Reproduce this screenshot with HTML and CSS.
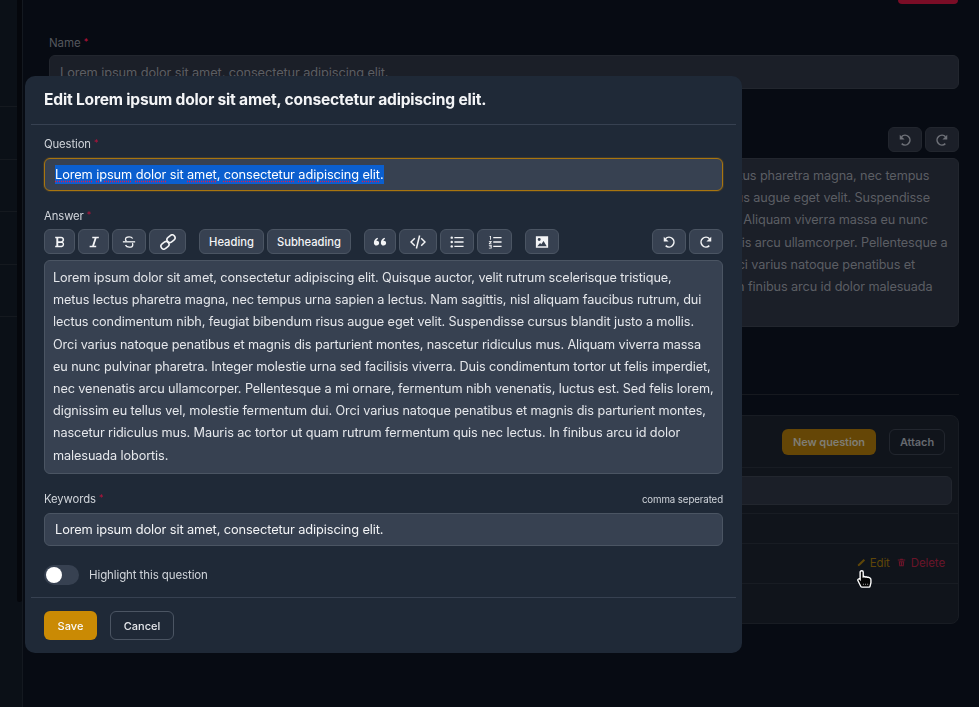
FILE: index.html
```html
<!DOCTYPE html>
<html lang="en">
<head>
<meta charset="utf-8">
<title>Edit question</title>
<link rel="stylesheet" href="styles.css">
</head>
<body>
<div class="app">
  <aside class="sidebar">
    <div class="side-col">
      <div class="side-row"></div>
      <div class="side-row"></div>
      <div class="side-row"></div>
      <div class="side-row"></div>
      <div class="side-row"></div>
    </div>
    <div class="side-scroll"></div>
  </aside>
  <main class="page">
    <div class="page-head">
      <h1 class="page-title">Edit the Compliance category</h1>
      <span class="danger-btn"></span>
    </div>
    <div class="bg-label">Name <sup>*</sup></div>
    <div class="bg-input">Lorem ipsum dolor sit amet, consectetur adipiscing elit.</div>
    <div class="bg-tools">
      <span class="bg-tool"><svg class="ico" viewBox="0 0 16 16"><use href="#undo"/></svg></span>
      <span class="bg-tool"><svg class="ico" viewBox="0 0 16 16"><use href="#redo"/></svg></span>
    </div>
    <div class="bg-text">
      <div>Lorem ipsum dolor sit amet, consectetur adipiscing elit. Quisque auctor, velit rutrum scelerisque tristique, metus lectus pharetra magna, nec tempus</div>
      <div>urna sapien a lectus. Nam sagittis, nisl aliquam faucibus rutrum, dui lectus condimentum nibh, feugiat bibendum risus augue eget velit. Suspendisse</div>
      <div>cursus blandit justo a mollis. Orci varius natoque penatibus et magnis dis parturient montes, nascetur ridiculus mus. Aliquam viverra massa eu nunc</div>
      <div>pulvinar pharetra. Integer molestie urna sed facilisis viverra. Duis condimentum tortor ut felis imperdiet, nec venenatis arcu ullamcorper. Pellentesque a</div>
      <div>mi ornare, fermentum nibh venenatis, luctus est. Sed felis lorem, dignissim eu tellus vel, molestie fermentum dui. Orci varius natoque penatibus et</div>
      <div>magnis dis parturient montes, nascetur ridiculus mus. Mauris ac tortor ut quam rutrum fermentum quis nec lectus. In finibus arcu id dolor malesuada</div>
      <div>lobortis.</div>
    </div>
    <hr class="bg-rule">
    <section class="bg-card">
      <div class="bg-card-head">
        <span class="btn-new">New question</span>
        <span class="btn-attach">Attach</span>
      </div>
      <div class="bg-search-row"><div class="bg-search"></div></div>
      <div class="bg-row bg-row-head"></div>
      <div class="bg-row bg-row-main">
        <span class="act-edit"><svg class="mini" viewBox="0 0 12 12"><path d="M1 11 1.6 8.4 8.8 1.2l2 2-7.200 7.200z"/></svg>Edit</span>
        <span class="act-del"><svg class="mini" viewBox="0 0 12 12"><path d="M4.3 1h3.400l.5 1H11v1.300H1V2h2.800zM2.300 4.300h7.400L9 11H3zM4.300 5.500v4.200h1V5.500zm2.400 0v4.200h1V5.500z" fill-rule="evenodd"/></svg>Delete</span>
        <svg class="cursor" viewBox="0 0 15 17"><path d="M4.500.7c.8 0 1.300.6 1.300 1.300v4.400l.9-.2 1 .4.900-.2 1 .5.900-.1 1.500.7c.7.4 1.100 1 1.100 1.800v2.700l-.8 3.300c-.1.600-.5.900-1 .9H4.700c-.5 0-.9-.2-1.100-.6L.9 10.200c-.4-.7-.2-1.400.4-1.700.5-.3 1.200-.2 1.600.3V2c0-.7.8-1.300 1.600-1.300z" fill="#050505" stroke="#fff" stroke-width="1.300"/><path d="M6 13v1M8 13v1M10 13v1" stroke="#bbb" stroke-width=".8"/></svg>
      </div>
      <div class="bg-row bg-row-last"></div>
    </section>
  </main>
</div>

<svg class="defs" width="0" height="0" aria-hidden="true">
  <defs>
    <symbol id="undo" viewBox="0 0 16 16"><path d="M4.200 12.200A5.600 5.600 0 1 0 4 4.200" fill="none" stroke="currentColor" stroke-width="1.800"/><path d="M2 2v5.500h5.500z" fill="currentColor"/></symbol>
    <symbol id="redo" viewBox="0 0 16 16"><path d="M11.800 12.200A5.600 5.600 0 1 1 12 4.200" fill="none" stroke="currentColor" stroke-width="1.800"/><path d="M14 2v5.500H8.500z" fill="currentColor"/></symbol>
  </defs>
</svg>

<div class="modal" role="dialog">
  <h2 class="modal-title">Edit Lorem ipsum dolor sit amet, consectetur adipiscing elit.</h2>
  <div class="modal-body">
    <label class="lbl lbl-q">Question <sup>*</sup></label>
    <div class="field field-focus"><span class="selected"><span class="sp">Lorem</span> <span class="sp">ipsum</span> <span class="sp">dolor</span> sit <span class="sp">amet</span>, <span class="sp">consectetur</span> <span class="sp">adipiscing</span> <span class="sp">elit</span>.</span></div>

    <label class="lbl lbl-a">Answer <sup>*</sup></label>
    <div class="toolbar">
      <div class="tool-group">
        <button class="tool"><svg class="ico" viewBox="0 0 16 16"><path d="M2.500 2h7a3.300 3.300 0 0 1 2 5.900A3.500 3.500 0 0 1 10 14H2.500v-1.800h1.300V3.800H2.500zM6 3.800v3.400h3.200a1.700 1.700 0 0 0 0-3.400zM6 9v3.200h3.600a1.600 1.600 0 0 0 0-3.200z" fill="currentColor" fill-rule="evenodd"/></svg></button>
        <button class="tool"><svg class="ico" viewBox="0 0 16 16"><path d="M6 2h7.500v1.800h-2.600L8.100 12.200h2.400V14H3v-1.800h2.900L8.700 3.800H6z" fill="currentColor"/></svg></button>
        <button class="tool tool-s"><svg class="ico" viewBox="0 0 16 16"><path d="M12.200 4C11.400 2.800 10 2.200 8.100 2.200 5.700 2.200 4 3.300 4 5c0 .9.400 1.600 1.300 2.200M4 11.600c.8 1.500 2.300 2.300 4.300 2.300 2.500 0 4-1.100 4-2.900 0-.6-.2-1.200-.5-1.600" fill="none" stroke="currentColor" stroke-width="1.500"/><path d="M1 7.800h14" stroke="currentColor" stroke-width="1.500"/></svg></button>
        <button class="tool tool-link"><svg class="ico ico-l" viewBox="0 0 16 16"><g fill="none" stroke="currentColor" stroke-width="1.600"><rect x="6.700" y="1.800" width="8.600" height="5.800" rx="2.900" transform="rotate(-38 11 4.700)"/><rect x=".7" y="8.400" width="8.600" height="5.800" rx="2.900" transform="rotate(-38 5 11.300)"/></g></svg></button>
      </div>
      <div class="tool-group">
        <button class="tool tool-head">Heading</button>
        <button class="tool tool-sub">Subheading</button>
      </div>
      <div class="tool-group">
        <button class="tool tool-q"><svg class="ico" viewBox="0 0 16 16"><path d="M1 9C1 6.200 2.500 4 5.200 3.200l.6 1.400C4.700 5.100 4 5.800 3.900 6.600c1.700-.2 3.100.8 3.100 2.500C7 10.700 5.800 12 4.100 12 2.200 12 1 10.700 1 9zm8 0c0-2.800 1.500-5 4.200-5.800l.6 1.400c-1.100.5-1.800 1.200-1.900 2 1.700-.2 3.100.8 3.100 2.500 0 1.600-1.200 2.900-2.900 2.900C10.200 12 9 10.700 9 9z" fill="currentColor"/></svg></button>
        <button class="tool tool-code"><svg class="ico ico-c" viewBox="0 0 16 16"><path d="M4.800 4.200 1 8l3.800 3.800M11.200 4.200 15 8l-3.800 3.800M9.600 1.500 6.400 14.500" fill="none" stroke="currentColor" stroke-width="1.500"/></svg></button>
        <button class="tool tool-list"><svg class="ico" viewBox="0 0 16 16"><path d="M5 3h10.500M5 8h10.500M5 13h10.500" stroke="currentColor" stroke-width="1.500"/><circle cx="2" cy="3" r="1.400" fill="currentColor"/><circle cx="2" cy="8" r="1.400" fill="currentColor"/><circle cx="2" cy="13" r="1.400" fill="currentColor"/></svg></button>
        <button class="tool tool-ol"><svg class="ico" viewBox="0 0 16 16"><path d="M6 3h9.500M6 8h9.500M6 13h9.500" stroke="currentColor" stroke-width="1.500"/><path d="M1.800 1h1.600v4.500H2.400V2h-.6zM1 6.900h3.200v1.200L2.500 9.600h1.700v1H1v-1.100l1.900-1.700H1zM1 11.300h3.200v4.200H1v-.9h2.200v-.8H1.700v-.8h1.500v-.8H1z" fill="currentColor"/></svg></button>
      </div>
      <button class="tool tool-img"><svg class="ico ico-i" viewBox="0 0 16 16"><path d="M1 1.500h14v13H1zM4.800 3.500a1.700 1.700 0 1 0 0 3.400 1.700 1.700 0 0 0 0-3.400zM2.600 12.800h10.800l-3.600-6-2.600 3.700-1.400-1.400z" fill="currentColor" fill-rule="evenodd"/></svg></button>
      <div class="tool-group tool-end">
        <button class="tool tool-h"><svg class="ico" viewBox="0 0 16 16"><use href="#undo"/></svg></button>
        <button class="tool tool-h"><svg class="ico" viewBox="0 0 16 16"><use href="#redo"/></svg></button>
      </div>
    </div>
    <div class="editor">
      <div>Lorem ipsum dolor sit amet, consectetur adipiscing elit. Quisque auctor, velit rutrum scelerisque tristique,</div>
      <div>metus lectus pharetra magna, nec tempus urna sapien a lectus. Nam sagittis, nisl aliquam faucibus rutrum, dui</div>
      <div>lectus condimentum nibh, feugiat bibendum risus augue eget velit. Suspendisse cursus blandit justo a mollis.</div>
      <div>Orci varius natoque penatibus et magnis dis parturient montes, nascetur ridiculus mus. Aliquam viverra massa</div>
      <div>eu nunc pulvinar pharetra. Integer molestie urna sed facilisis viverra. Duis condimentum tortor ut felis imperdiet,</div>
      <div>nec venenatis arcu ullamcorper. Pellentesque a mi ornare, fermentum nibh venenatis, luctus est. Sed felis lorem,</div>
      <div>dignissim eu tellus vel, molestie fermentum dui. Orci varius natoque penatibus et magnis dis parturient montes,</div>
      <div>nascetur ridiculus mus. Mauris ac tortor ut quam rutrum fermentum quis nec lectus. In finibus arcu id dolor</div>
      <div>malesuada lobortis.</div>
    </div>
    <div class="kw-head">
      <label class="lbl lbl-k">Keywords <sup>*</sup></label>
      <span class="hint">comma seperated</span>
    </div>
    <div class="field">Lorem ipsum dolor sit amet, consectetur adipiscing elit.</div>
    <div class="toggle-row">
      <span class="toggle"><span class="knob"></span></span>
      <span class="toggle-label">Highlight this question</span>
    </div>
  </div>
  <div class="modal-foot">
    <button class="btn btn-save">Save</button>
    <button class="btn btn-cancel">Cancel</button>
  </div>
</div>
</body>
</html>
```

FILE: styles.css
```css
* { box-sizing: border-box; }
html, body { margin: 0; height: 100%; }
body {
  background: #070b13;
  font-family: Inter, "Liberation Sans", sans-serif;
  letter-spacing: -0.1px;
  overflow: hidden;
  color: #e5e7eb;
}
.defs { position: absolute; }
.app { display: flex; height: 707px; overflow: hidden; }
.sidebar {
  width: 23px;
  flex: none;
  display: flex;
  border-right: 1px solid #141920;
  background: #0b1017;
}
.side-col { width: 17px; padding-top: 106px; }
.side-row { height: 52.5px; border-top: 1px solid #15191f; }
.side-scroll { width: 5px; height: 602px; background: #05070c; border-radius: 0 0 3px 3px; }
.page { flex: 1; padding: 0 20px 0 26px; min-width: 0; }
.page-head { height: 35px; display: flex; justify-content: space-between; }
.page-title { margin: -30px 0 0 -20px; font-size: 26px; font-weight: 700; color: #5f6165; line-height: 30px; height: 30px; white-space: nowrap; letter-spacing: 1.2px; }
.danger-btn { width: 60px; height: 4px; background: #7a0d26; border-radius: 0 0 4px 4px; margin-right: 1px; }
.bg-label { font-size: 11.5px; color: #54575d; line-height: 16px; height: 20px; }
.bg-label sup, .lbl sup { color: #be123c; font-size: 9px; line-height: 0; vertical-align: 2px; }
.bg-input {
  height: 34px;
  padding: 0 10px;
  line-height: 34px;
  font-size: 12.8px;
  color: #5b5e64;
  background: #1b1f28;
  border: 1px solid #22262e;
  border-radius: 6px;
  white-space: nowrap;
  overflow: hidden;
}
.bg-tools { display: flex; justify-content: flex-end; gap: 3px; margin-top: 38px; }
.bg-tool {
  width: 34px; height: 25px;
  background: #1b1f28;
  border: 1px solid #22262e;
  border-radius: 6px;
  color: #6e7178;
  display: flex; align-items: center; justify-content: center;
}
.bg-text {
  margin-top: 6px;
  height: 169px;
  background: #1b1f28;
  border: 1px solid #22262e;
  border-radius: 6px;
  padding: 6px 9px;
  font-size: 12.7px;
  line-height: 22.2px;
  color: #5b5e64;
  white-space: nowrap;
  overflow: hidden;
}
.bg-rule { border: 0; border-top: 1px solid #16191f; margin: 67px 0 0; }
.bg-card {
  margin-top: 20px;
  height: 209px;
  background: #10141b;
  border: 1px solid #181c23;
  border-radius: 8px;
}
.bg-card-head {
  height: 52px;
  display: flex; justify-content: flex-end; align-items: center; gap: 13px;
  padding-right: 7px;
  border-bottom: 1px solid #181c23;
  margin-right: 6px;
}
.btn-new, .btn-attach { height: 26px; line-height: 26px; font-size: 11px; font-weight: 600; border-radius: 6px; text-align: center; }
.btn-new { width: 94px; background: #654606; color: #7f7d74; }
.btn-attach { width: 56px; border: 1px solid #22262e; line-height: 24px; color: #66696f; }
.bg-search-row { height: 46px; padding: 8px 6px 0 0; border-bottom: 1px solid #181c23; }
.bg-search { height: 29px; background: #1b1f28; border: 1px solid #22262e; border-radius: 6px; }
.bg-row { border-bottom: 1px solid #181c23; }
.bg-row-head { height: 30px; }
.bg-row-main {
  height: 40px;
  position: relative;
  display: flex; justify-content: flex-end; align-items: center; gap: 7px;
  padding: 0 13px 2px 0;
  font-size: 11.5px;
}
.bg-row-last { border-bottom: 0; }
.act-edit { color: #5f4608; display: flex; align-items: center; gap: 4px; }
.act-del { color: #6a1429; display: flex; align-items: center; gap: 5px; }
.mini { width: 9px; height: 9px; fill: currentColor; }
.cursor { position: absolute; right: 85px; top: 26px; width: 16px; height: 18px; }
.ico { width: 14px; height: 14px; display: block; }

.modal {
  position: fixed;
  left: 25px; top: 76px;
  width: 717px; height: 577px;
  background: #1f2937;
  border-radius: 10px;
}
.modal-title {
  margin: 0 6px;
  height: 49px;
  padding: 0 14px 0 13px;
  font-size: 15.6px;
  font-weight: 700;
  line-height: 48px;
  color: #f3f4f6;
  border-bottom: 1px solid #374151;
  white-space: nowrap;
  letter-spacing: -0.2px;
}
.modal-body { padding: 12px 19px 0; height: 472px; }
.lbl { display: block; font-size: 11.3px; line-height: 15px; color: #d1d5db; }
.lbl-q { margin-bottom: 5.5px; }
.lbl-a { margin-top: 17.5px; margin-bottom: 5.5px; }
.field {
  height: 33.5px;
  padding: 0 10px;
  background: #374151;
  border: 1px solid #4b5563;
  border-radius: 6px;
  font-size: 12.8px;
  line-height: 31px;
  color: #f3f4f6;
  white-space: nowrap;
}
.field-focus { border-color: #a8750f; box-shadow: 0 0 0 1px #a8750f33; }
.selected { background: #0b5fcf; color: #fff; padding: 2px 0; }
.sp { text-decoration: underline dotted #e11d48; text-underline-offset: 2px; }
.toolbar { display: flex; gap: 13px; }
.tool-group { display: flex; gap: 3px; }
.tool-end { margin-left: auto; }
.tool {
  height: 25px;
  width: 31px;
  padding: 0;
  background: #374151;
  border: 1px solid #4b5563;
  border-radius: 6px;
  color: #f3f4f6;
  display: flex; align-items: center; justify-content: center;
  font: 500 11.2px Inter, "Liberation Sans", sans-serif;
}
.tool-s { width: 34px; }
.tool-link { width: 37px; }
.tool-head { width: 65px; }
.tool-sub { width: 84px; }
.tool-q { width: 32px; }
.tool-code { width: 38px; }
.tool-list { width: 34px; }
.tool-ol { width: 35px; }
.tool-img { width: 34px; }
.tool-h { width: 34px; }
.ico-l { width: 16px; height: 16px; }
.ico-c { width: 16px; height: 16px; }
.editor {
  margin-top: 6px;
  height: 214px;
  padding: 6px 8px;
  background: #374151;
  border: 1px solid #4b5563;
  border-radius: 6px;
  font-size: 12.7px;
  line-height: 22.2px;
  color: #e5e7eb;
  white-space: nowrap;
  overflow: hidden;
}
.kw-head { display: flex; justify-content: space-between; align-items: center; margin-top: 18px; margin-bottom: 5.5px; height: 15px; }
.hint { font-size: 9.7px; color: #d1d5db; }
.toggle-row { display: flex; align-items: center; gap: 10px; margin-top: 19px; }
.toggle { width: 35px; height: 20px; border-radius: 10px; background: #374151; display: flex; align-items: center; padding-left: 2px; }
.knob { width: 16px; height: 16px; border-radius: 50%; background: #fff; }
.toggle-label { font-size: 11.5px; color: #d1d5db; }
.modal-foot {
  margin: 0 6px;
  height: 56px;
  border-top: 1px solid #374151;
  padding: 13px 13px 0;
  display: flex; gap: 13px;
}
.btn { height: 29px; border-radius: 6px; font: 500 11px Inter, "Liberation Sans", sans-serif; }
.btn-save { width: 53px; background: #ca8a04; color: #f9fafb; border: 0; }
.btn-cancel { width: 64px; background: transparent; color: #e5e7eb; border: 1px solid #4b5563; }
```
